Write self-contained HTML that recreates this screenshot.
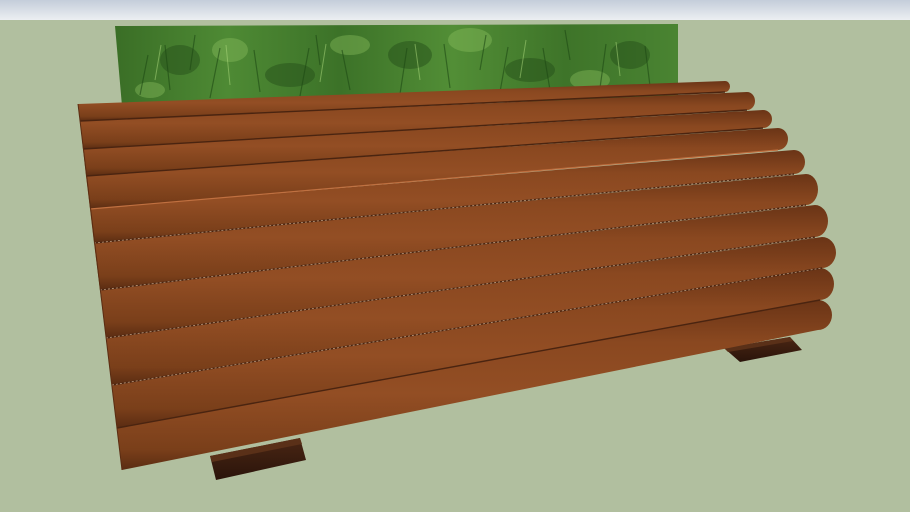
<!DOCTYPE html>
<html><head><meta charset="utf-8"><style>html,body{margin:0;padding:0;width:910px;height:512px;overflow:hidden;background:#b1bf9f}</style></head>
<body>
<svg width="910" height="512" viewBox="0 0 910 512" xmlns="http://www.w3.org/2000/svg">
<defs>
<linearGradient id="sky" x1="0" y1="0" x2="0" y2="1"><stop offset="0" stop-color="#c4cdda"/><stop offset="1" stop-color="#eceff2"/></linearGradient>
<linearGradient id="grass" x1="0" y1="0" x2="1" y2="0"><stop offset="0" stop-color="#3a6e26"/><stop offset="0.2" stop-color="#4e8a34"/><stop offset="0.4" stop-color="#3c7228"/><stop offset="0.6" stop-color="#528e36"/><stop offset="0.8" stop-color="#3e7429"/><stop offset="1" stop-color="#4a8432"/></linearGradient>
<linearGradient id="log" x1="0" y1="0" x2="0" y2="1"><stop offset="0" stop-color="#6a3416"/><stop offset="0.25" stop-color="#8a4820"/><stop offset="0.55" stop-color="#934e24"/><stop offset="0.88" stop-color="#7a3f1a"/><stop offset="1" stop-color="#5a2c12"/></linearGradient>
<linearGradient id="foot" x1="0" y1="0" x2="0" y2="1"><stop offset="0" stop-color="#4a2614"/><stop offset="1" stop-color="#2a140a"/></linearGradient>
</defs>
<rect x="0" y="0" width="910" height="20" fill="url(#sky)"/>
<rect x="0" y="20" width="910" height="492" fill="#b1bf9f"/>
<polygon points="115,26 678,24 678,100 122,106" fill="url(#grass)"/>
<g fill="#26501a" opacity="0.5">
<ellipse cx="180" cy="60" rx="20" ry="15"/><ellipse cx="290" cy="75" rx="25" ry="12"/><ellipse cx="410" cy="55" rx="22" ry="14"/><ellipse cx="530" cy="70" rx="25" ry="12"/><ellipse cx="630" cy="55" rx="20" ry="14"/>
</g>
<g fill="#8cc060" opacity="0.4">
<ellipse cx="230" cy="50" rx="18" ry="12"/><ellipse cx="350" cy="45" rx="20" ry="10"/><ellipse cx="470" cy="40" rx="22" ry="12"/><ellipse cx="590" cy="80" rx="20" ry="10"/><ellipse cx="150" cy="90" rx="15" ry="8"/>
</g>
<g stroke="#1e4a14" stroke-width="1.2" opacity="0.6">
<path d="M140,95 l8,-40 M170,90 l-5,-45 M210,98 l10,-50 M260,92 l-6,-42 M300,96 l9,-48 M350,90 l-8,-40 M400,94 l7,-46 M450,88 l-6,-44 M500,92 l8,-45 M550,90 l-7,-42 M600,88 l6,-44 M650,86 l-5,-40 M190,70 l5,-35 M320,65 l-4,-30 M480,70 l6,-35 M570,60 l-5,-30"/>
</g>
<g stroke="#b0dc80" stroke-width="1" opacity="0.5">
<path d="M155,80 l6,-35 M230,85 l-4,-40 M320,82 l6,-38 M420,80 l-5,-36 M520,78 l6,-38 M620,76 l-4,-34"/>
</g>
<polygon points="210,456 300,438 306,460 216,480" fill="url(#foot)"/>
<polygon points="210,456 300,438 302,444 212,462" fill="#5a3018"/>
<polygon points="724,348 790,337 802,350 740,362" fill="url(#foot)"/>
<polygon points="724,348 790,337 793,341 728,352" fill="#5a3018"/>
<g>
<path d="M78,104 L725,81 A5,5.5 0 0 1 725,92 L80,121 Z" fill="url(#log)"/>
<path d="M80,121 L747,92 A8,9 0 0 1 747,110 L83,149 Z" fill="url(#log)"/>
<path d="M83,149 L763,110 A9,9 0 0 1 763,128 L86,176 Z" fill="url(#log)"/>
<path d="M86,176 L778,128 A10,11 0 0 1 778,150 L90,209 Z" fill="url(#log)"/>
<path d="M90,209 L794,150 A11,12 0 0 1 794,174 L94,243 Z" fill="url(#log)"/>
<path d="M94,243 L806,174 A12,15.5 0 0 1 806,205 L100,290 Z" fill="url(#log)"/>
<path d="M100,290 L815,205 A13,16 0 0 1 815,237 L106,338 Z" fill="url(#log)"/>
<path d="M106,338 L822,237 A14,15.5 0 0 1 822,268 L112,385 Z" fill="url(#log)"/>
<path d="M112,385 L820,268 A14,16 0 0 1 820,300 L117,428 Z" fill="url(#log)"/>
<path d="M117,428 L818,300 A14,15 0 0 1 818,330 L122,470 Z" fill="url(#log)"/>
</g>
<g stroke="#4a2410" stroke-width="1.4" fill="none">
<path d="M80,121 L725,92 M83,149 L747,110 M86,176 L763,128 M94,243 L794,174 M100,290 L806,205 M106,338 L815,237 M112,385 L822,268 M117,428 L820,300"/>
</g>
<g stroke="#d8b898" stroke-width="0.8" fill="none" stroke-dasharray="2,2" opacity="0.8">
<path d="M94,243 L794,174 M100,290 L806,205 M106,338 L815,237 M112,385 L822,268"/>
</g>
<path d="M90,209 L778,150" stroke="#c07040" stroke-width="1.2"/>
<path d="M78,104 L122,470" stroke="#5a2c12" stroke-width="1"/>
</svg>
</body></html>
